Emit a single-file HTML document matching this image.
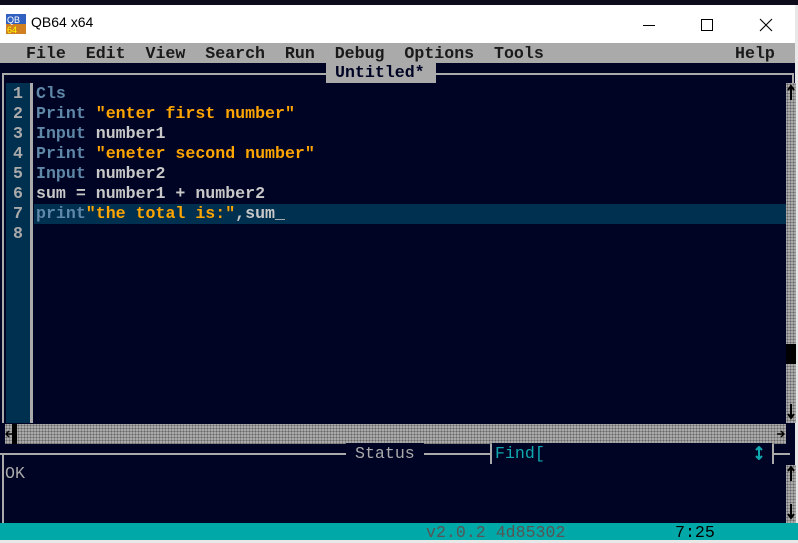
<!DOCTYPE html>
<html><head><style>
*{margin:0;padding:0;box-sizing:border-box}
body{width:798px;height:540px;overflow:hidden;background:#e8e8e8;position:relative;font-family:"Liberation Mono",monospace}
.a{position:absolute}
.t{font-size:16.6px;line-height:20px;white-space:pre;font-weight:bold;}
.dot{background-color:#aaa;background-image:radial-gradient(#666 0.8px,transparent 1px);background-size:3px 3px}
.k{color:#5f88a8}.s{color:#ffa500}.n{color:#c8c8c8}
</style></head><body>
<div class="a" style="left:0;top:0;width:798px;height:5px;background:#0c0c1c"></div>
<div class="a" style="left:0;top:5px;width:795px;height:38px;background:#fff"></div>
<svg class="a" style="left:6px;top:14px" width="20" height="20"><rect width="20" height="10" fill="#3060c0"/><rect y="10" width="20" height="10" fill="#d08020"/><text x="1" y="9" font-size="9" fill="#fff" font-family="Liberation Sans">QB</text><text x="1" y="19" font-size="9" fill="#ff0" font-family="Liberation Sans">64</text></svg>
<div class="a" style="left:31px;top:14px;font:14px 'Liberation Sans',sans-serif;color:#000">QB64 x64</div>
<div class="a" style="left:643px;top:25px;width:12px;height:1px;background:#000"></div>
<div class="a" style="left:701px;top:19px;width:12px;height:12px;border:1px solid #000"></div>
<svg class="a" style="left:759px;top:18px" width="14" height="14"><path d="M1 1L13 13M13 1L1 13" stroke="#000" stroke-width="1.1"/></svg>
<div class="a" style="left:0;top:43px;width:795px;height:20px;background:#aaa"></div>
<div class="a t" style="left:26px;top:44px;color:#1a1a1a">File  Edit  View  Search  Run  Debug  Options  Tools</div>
<div class="a t" style="left:735px;top:44px;color:#1a1a1a">Help</div>
<div class="a" style="left:0;top:63px;width:795px;height:460px;background:#000424"></div>
<div class="a" style="left:2px;top:73px;width:792px;height:350px;border:2px solid #aaa;border-bottom:none"></div>
<div class="a" style="left:326px;top:63px;width:110px;height:20px;background:#aaa"></div>
<div class="a t" style="left:335px;top:63px;color:#000424">Untitled*</div>
<div class="a" style="left:6px;top:83px;width:24px;height:340px;background:#003050"></div>
<div class="a" style="left:30px;top:83px;width:3px;height:340px;background:#aaa"></div>
<div class="a" style="left:34px;top:204px;width:752px;height:20px;background:#003050"></div>
<div class="a t" style="left:13px;top:84px;color:#aaa">1
2
3
4
5
6
7
8</div>
<div class="a t" style="left:36px;top:84px"><span class="k">Cls</span>
<span class="k">Print</span> <span class="s">"enter first number"</span>
<span class="k">Input</span> <span class="n">number1</span>
<span class="k">Print</span> <span class="s">"eneter second number"</span>
<span class="k">Input</span> <span class="n">number2</span>
<span class="n">sum = number1 + number2</span>
<span class="k">print</span><span class="s">"the total is:"</span><span class="n">,sum_</span></div>
<div class="a dot" style="left:786px;top:83px;width:10px;height:340px"></div>
<div class="a" style="left:786px;top:344px;width:10px;height:20px;background:#000"></div>
<svg class="a" style="left:786px;top:84px" width="10" height="18"><path d="M5 2V16M2 6L5 2L8 6" stroke="#000" stroke-width="2" fill="none"/></svg>
<svg class="a" style="left:786px;top:402px" width="10" height="18"><path d="M5 2V16M2 12L5 16L8 12" stroke="#000" stroke-width="2" fill="none"/></svg>
<div class="a dot" style="left:5px;top:424px;width:781px;height:20px"></div>
<div class="a" style="left:12px;top:424px;width:5px;height:20px;background:#000"></div>
<svg class="a" style="left:5px;top:428px" width="8" height="12"><path d="M1 6H8M4 3L1 6L4 9" stroke="#000" stroke-width="1.5" fill="none"/></svg>
<svg class="a" style="left:777px;top:428px" width="8" height="12"><path d="M0 6H7M4 3L7 6L4 9" stroke="#000" stroke-width="1.5" fill="none"/></svg>
<div class="a" style="left:0;top:453px;width:790px;height:2px;background:#aaa"></div>
<div class="a" style="left:346px;top:443px;width:78px;height:20px;background:#000424"></div>
<div class="a t" style="left:355px;top:444px;color:#aaa;font-weight:normal">Status</div>
<div class="a" style="left:490px;top:444px;width:2px;height:20px;background:#aaa"></div>
<div class="a" style="left:492px;top:443px;width:280px;height:20px;background:#000424"></div>
<div class="a t" style="left:495px;top:444px;color:#10a8b0;font-weight:normal">Find[</div>
<svg class="a" style="left:755px;top:446px" width="8" height="14"><path d="M4 1V13M1 4L4 1L7 4M1 10L4 13L7 10" stroke="#10a8b0" stroke-width="2" fill="none"/></svg>
<div class="a" style="left:772px;top:444px;width:2px;height:20px;background:#aaa"></div>
<div class="a" style="left:2px;top:455px;width:2px;height:68px;background:#aaa"></div>
<div class="a t" style="left:5px;top:464px;color:#aaa;font-weight:normal">OK</div>
<div class="a dot" style="left:786px;top:465px;width:10px;height:58px"></div>
<svg class="a" style="left:786px;top:465px" width="10" height="18"><path d="M5 2V16M2 6L5 2L8 6" stroke="#000" stroke-width="2" fill="none"/></svg>
<svg class="a" style="left:786px;top:502px" width="10" height="18"><path d="M5 2V16M2 12L5 16L8 12" stroke="#000" stroke-width="2" fill="none"/></svg>
<div class="a" style="left:0;top:523px;width:798px;height:17px;background:#00a8a8"></div>
<div class="a t" style="left:426px;top:523px;color:#555;font-weight:normal">v2.0.2 4d85302</div>
<div class="a t" style="left:675px;top:523px;color:#000;font-weight:normal">7:25</div>
</body></html>
